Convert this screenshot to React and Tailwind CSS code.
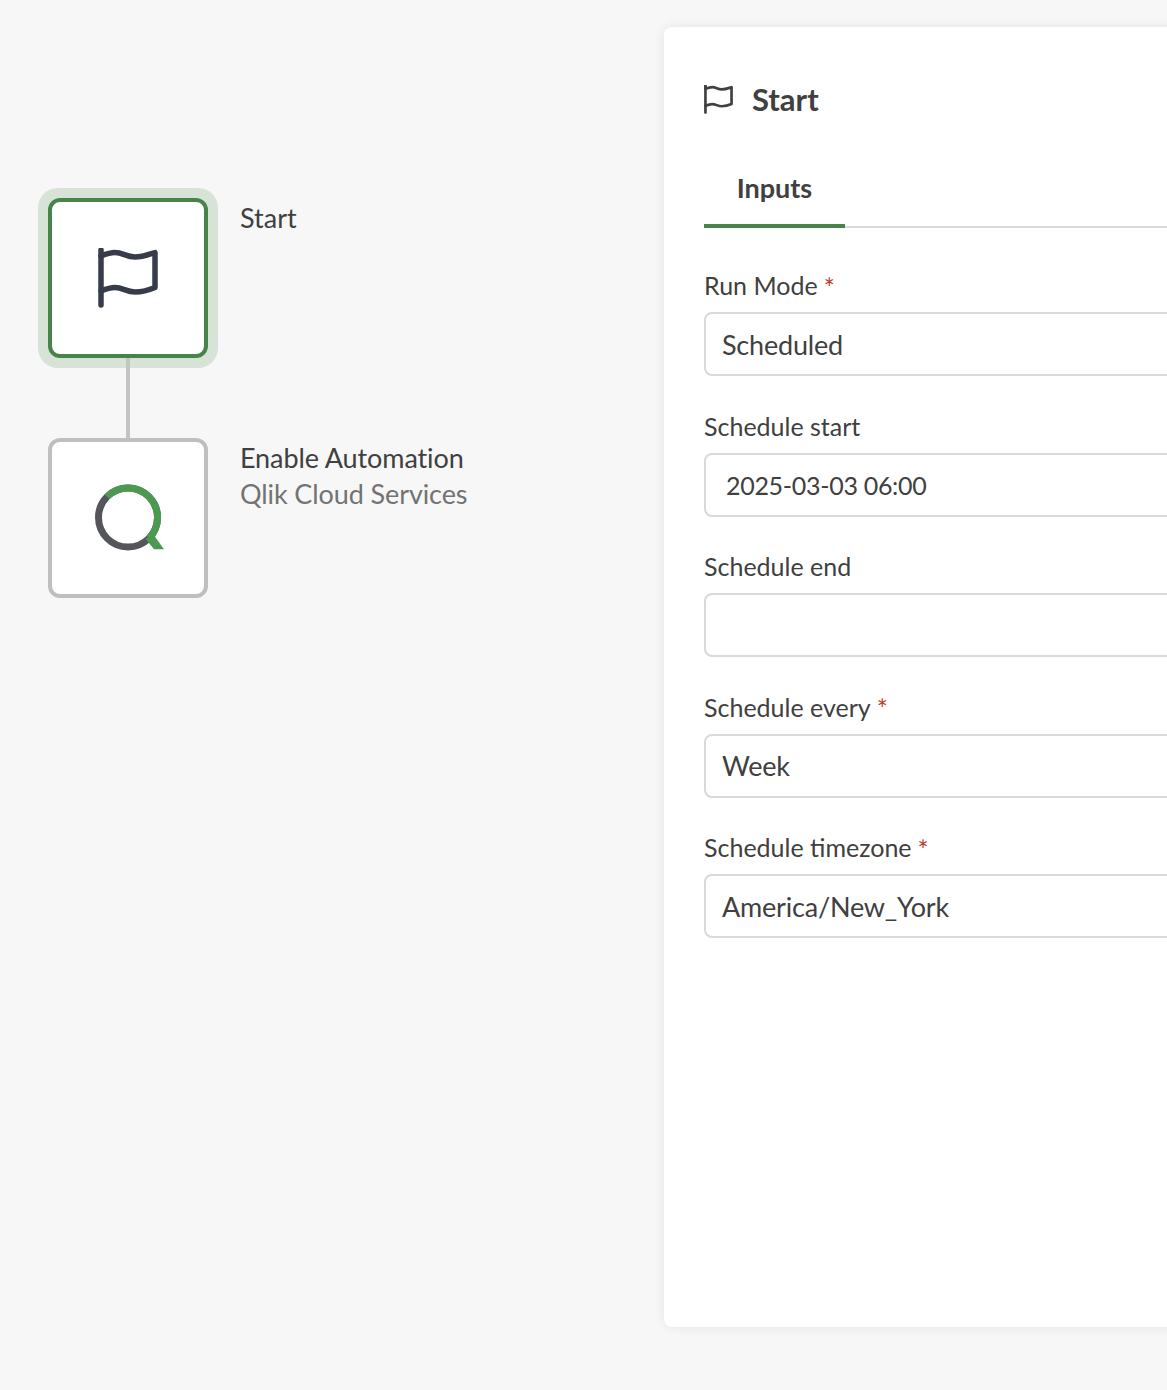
import React from "react";

const FONT = "font-['Lato','Noto_Sans',sans-serif]";

const FIELDS = [
  { label: "Run Mode", value: "Scheduled", required: true },
  { label: "Schedule start", value: "2025-03-03 06:00", date: true },
  { label: "Schedule end", value: "" },
  { label: "Schedule every", value: "Week", required: true },
  { label: "Schedule timezone", value: "America/New_York", required: true },
];

function FlagIcon({ className, dot }) {
  return (
    <svg viewBox="0 0 60 60" fill="none" stroke="currentColor" strokeWidth="5.5" strokeLinecap="round" strokeLinejoin="round" className={className}>
      <path d="M3 2v55" />
      <path d="M3 8c5-2 9-3.500 14-3.500 8 0 11 4.500 20 4.500 8 0 12-2 20-4.500v35c-7 3-12 4.500-20 4.500-9 0-12-4.500-20-4.500-5 0-9 1.500-14 3.500" />
      {dot && <circle cx="3" cy="3" r="3" fill="currentColor" stroke="none" />}
    </svg>
  );
}

function QlikLogo() {
  return (
    <svg viewBox="0 0 72 68" className="w-[72px] h-[68px]" fill="none">
      <circle cx="36" cy="33.500" r="29.500" stroke="#54565b" strokeWidth="7" />
      <path d="M15.100 12.600A29.500 29.500 0 0 1 56.900 54.400" stroke="#4b9a50" strokeWidth="7" />
      <path d="M53 54.300L63 52.700 72 65.300H62z" fill="#4b9a50" />
    </svg>
  );
}

function Field({ label, value, required, date }) {
  return (
    <div className="flex flex-col">
      <div className="h-[27px] flex items-center gap-[6px] text-[25px] text-[#404040] leading-none">
        <span>{label}</span>
        {required && <span className="text-[#c0392b] text-[26px] mt-[4px]">*</span>}
      </div>
      <div className={`mt-[13px] h-[64px] w-[600px] border-2 border-[#d9d9d9] rounded-[8px] flex items-center pt-[2px] text-[#404040] bg-white ${date ? "pl-[20px] text-[25px] tracking-[-0.3px]" : "pl-[16px] text-[27px] tracking-[-0.2px]"}`}>
        {value}
      </div>
    </div>
  );
}

export default function App() {
  return (
    <div className={`h-[1390px] w-[1167px] overflow-hidden bg-[#f7f7f7] flex ${FONT}`}>
      {/* Flow canvas */}
      <div className="w-[664px] shrink-0 pt-[188px] pl-[38px]">
        <div className="flex">
          <div className="w-[180px] h-[180px] rounded-[20px] bg-[#d8e3d8] flex items-center justify-center shrink-0">
            <div className="w-[160px] h-[160px] bg-white border-4 border-[#47844a] rounded-[12px] flex items-center justify-center">
              <FlagIcon className="w-[60px] h-[60px] text-[#363c4a]" />
            </div>
          </div>
          <div className="ml-[22px] mt-[13px] text-[27px] leading-[34px] text-[#404040]">Start</div>
        </div>
        <div className="relative w-[4px] h-[80px] -mt-[10px] ml-[88px] bg-[#c4c4c4]" />
        <div className="flex ml-[10px]">
          <div className="w-[160px] h-[160px] bg-white border-4 border-[#bfbfbf] rounded-[12px] flex items-center justify-center shrink-0">
            <QlikLogo />
          </div>
          <div className="ml-[32px] mt-[2px] text-[27px] leading-[36px] tracking-[-0.1px]">
            <div className="text-[#404040]">Enable Automation</div>
            <div className="text-[#737373]">Qlik Cloud Services</div>
          </div>
        </div>
      </div>

      {/* Inputs panel */}
      <div className="mt-[27px] h-[1300px] w-[560px] shrink-0 bg-white rounded-[8px] shadow-[0_0_12px_rgba(0,0,0,0.08)] pt-[52px] pl-[40px]">
        <div className="flex items-center h-[40px] text-[#404040]">
          <FlagIcon dot className="w-[29px] h-[29px]" />
          <span className="ml-[19px] text-[31px] font-bold leading-none">Start</span>
        </div>
        <div className="mt-[41px] h-[68px] border-b-2 border-[#d9d9d9] flex">
          <div className="w-[141px] h-[68px] border-b-4 border-[#47844a] flex items-center justify-center pb-[7px] text-[27px] font-bold text-[#404040]">
            Inputs
          </div>
        </div>
        <div className="mt-[44px] flex flex-col gap-[36.500px]">
          {FIELDS.map(f => <Field key={f.label} {...f} />)}
        </div>
      </div>
    </div>
  );
}
